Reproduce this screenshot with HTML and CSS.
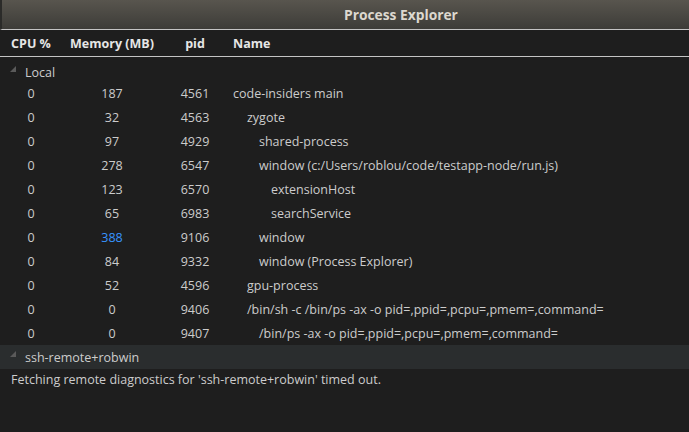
FILE: index.html
```html
<!DOCTYPE html>
<html>
<head>
<meta charset="utf-8">
<link rel="stylesheet" href="styles.css">
</head>
<body>
<div class="window">
  <div class="titlebar"><span class="title">Process Explorer</span></div>
  <div class="header row">
    <div class="c-cpu">CPU %</div>
    <div class="c-mem">Memory (MB)</div>
    <div class="c-pid">pid</div>
    <div class="c-name">Name</div>
  </div>
  <div class="group local"><span class="expander"></span><span>Local</span></div>
  <div class="rows">
    <div class="row"><div class="c-cpu">0</div><div class="c-mem">187</div><div class="c-pid">4561</div><div class="c-name l0">code-insiders main</div></div>
    <div class="row"><div class="c-cpu">0</div><div class="c-mem">32</div><div class="c-pid">4563</div><div class="c-name l1">zygote</div></div>
    <div class="row"><div class="c-cpu">0</div><div class="c-mem">97</div><div class="c-pid">4929</div><div class="c-name l2">shared-process</div></div>
    <div class="row"><div class="c-cpu">0</div><div class="c-mem">278</div><div class="c-pid">6547</div><div class="c-name l2">window (c:/Users/roblou/code/testapp-node/run.js)</div></div>
    <div class="row"><div class="c-cpu">0</div><div class="c-mem">123</div><div class="c-pid">6570</div><div class="c-name l3">extensionHost</div></div>
    <div class="row"><div class="c-cpu">0</div><div class="c-mem">65</div><div class="c-pid">6983</div><div class="c-name l3">searchService</div></div>
    <div class="row"><div class="c-cpu">0</div><div class="c-mem hot">388</div><div class="c-pid">9106</div><div class="c-name l2">window</div></div>
    <div class="row"><div class="c-cpu">0</div><div class="c-mem">84</div><div class="c-pid">9332</div><div class="c-name l2">window (Process Explorer)</div></div>
    <div class="row"><div class="c-cpu">0</div><div class="c-mem">52</div><div class="c-pid">4596</div><div class="c-name l1">gpu-process</div></div>
    <div class="row"><div class="c-cpu">0</div><div class="c-mem">0</div><div class="c-pid">9406</div><div class="c-name l1">/bin/sh -c /bin/ps -ax -o pid=,ppid=,pcpu=,pmem=,command=</div></div>
    <div class="row"><div class="c-cpu">0</div><div class="c-mem">0</div><div class="c-pid">9407</div><div class="c-name l2">/bin/ps -ax -o pid=,ppid=,pcpu=,pmem=,command=</div></div>
  </div>
  <div class="group remote"><span class="expander"></span><span>ssh-remote+robwin</span></div>
  <div class="message">Fetching remote diagnostics for 'ssh-remote+robwin' timed out.</div>
</div>
</body>
</html>
```
FILE: styles.css
```css
html, body {
  margin: 0;
  padding: 0;
  background: #1e1e1e;
}
body {
  width: 689px;
  height: 432px;
  overflow: hidden;
  font-family: "Open Sans", "Noto Sans", sans-serif;
  font-size: 12.5px;
  color: #cccccc;
}
.window {
  display: flex;
  flex-direction: column;
}
.titlebar {
  height: 29px;
  background: linear-gradient(#58554e, #3d3c38);
  border-bottom: 1px solid #c4c4c4;
  border-left: 2px solid #2b2b29;
  display: flex;
  align-items: center;
  padding-left: 342px;
}
.title {
  font-weight: 700;
  font-size: 13.8px;
  color: #dcd8cf;
}
.row {
  display: grid;
  grid-template-columns: 62px 100px 66px 1fr;
  height: 24px;
  align-items: center;
  white-space: nowrap;
}
.c-cpu, .c-mem, .c-pid { text-align: center; }
.c-name { padding-left: 5px; }
.header {
  height: 26px;
  border-bottom: 1px solid #c4c4c4;
  font-weight: 700;
  color: #e6e6e6;
}
.group {
  display: flex;
  align-items: center;
  height: 24px;
  padding-left: 10px;
  gap: 9px;
}
.local { margin-top: 3px; }
.rows { margin-top: -3px; }
.expander {
  width: 0;
  height: 0;
  border-style: solid;
  border-width: 0 0 6px 6px;
  border-color: transparent transparent #5a5a5a transparent;
  margin-top: -6px;
}
.remote { background: #2a2d2e; }
.message {
  padding-left: 11px;
  height: 22px;
  line-height: 22px;
}
.hot { color: #3794ff; }
.l0 { padding-left: 5px; }
.l1 { padding-left: 19px; }
.l2 { padding-left: 31px; }
.l3 { padding-left: 43px; }
```
